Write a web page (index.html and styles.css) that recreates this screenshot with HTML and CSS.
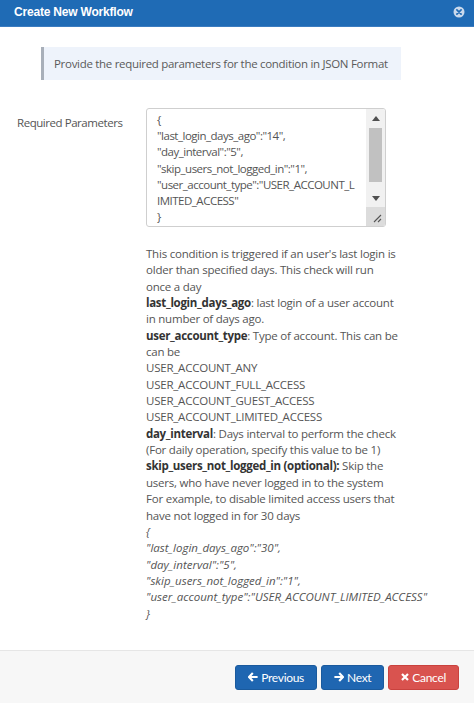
FILE: index.html
```html
<!DOCTYPE html>
<html>
<head>
<meta charset="utf-8">
<link rel="stylesheet" href="styles.css">
</head>
<body>
<div class="modal">
  <div class="modal-header">
    <span class="modal-title">Create New Workflow</span>
    <svg class="close-icon" width="12" height="12" viewBox="0 0 12 12"><circle cx="6" cy="6" r="5.5" fill="#c9d9ec"/><path d="M3.9 3.9 L8.1 8.1 M8.1 3.9 L3.9 8.1" stroke="#1f6bb5" stroke-width="1.7" stroke-linecap="round"/></svg>
  </div>
  <div class="modal-body">
    <div class="callout">Provide the required parameters for the condition in JSON Format</div>
    <div class="form-row">
      <label class="form-label">Required Parameters</label>
      <div class="form-field">
        <div class="textarea">
          <div class="ta-text">{
"last_login_days_ago":"14",
"day_interval":"5",
"skip_users_not_logged_in":"1",
"user_account_type":"USER_ACCOUNT_L
IMITED_ACCESS"
}</div>
          <div class="ta-scroll">
            <div class="sb-arrow"><svg width="8" height="5" viewBox="0 0 8 5"><path d="M0 5 L4 0 L8 5 Z" fill="#505050"/></svg></div>
            <div class="sb-track"><div class="sb-thumb"></div></div>
            <div class="sb-arrow"><svg width="8" height="5" viewBox="0 0 8 5"><path d="M0 0 L4 5 L8 0 Z" fill="#505050"/></svg></div>
            <div class="sb-corner"><svg width="9" height="9" viewBox="0 0 9 9"><path d="M1 8 L8 1 M5 8 L8 5" stroke="#555" stroke-width="1.1"/></svg></div>
          </div>
        </div>
        <div class="help">
          <p>This condition is triggered if an user's last login is<br>older than specified days. This check will run<br>once a day</p>
          <p><b>last_login_days_ago</b>: last login of a user account<br>in number of days ago.</p>
          <p><b>user_account_type</b>: Type of account. This can be<br>can be</p>
          <p>USER_ACCOUNT_ANY</p>
          <p>USER_ACCOUNT_FULL_ACCESS</p>
          <p>USER_ACCOUNT_GUEST_ACCESS</p>
          <p>USER_ACCOUNT_LIMITED_ACCESS</p>
          <p><b>day_interval</b>: Days interval to perform the check<br>(For daily operation, specify this value to be 1)</p>
          <p><b>skip_users_not_logged_in (optional):</b> Skip the<br>users, who have never logged in to the system</p>
          <p>For example, to disable limited access users that<br>have not logged in for 30 days</p>
          <p class="ex">{</p>
          <p class="ex">"last_login_days_ago":"30",</p>
          <p class="ex">"day_interval":"5",</p>
          <p class="ex">"skip_users_not_logged_in":"1",</p>
          <p class="ex">"user_account_type":"USER_ACCOUNT_LIMITED_ACCESS"</p>
          <p class="ex">}</p>
        </div>
      </div>
    </div>
  </div>
  <div class="modal-footer">
    <button class="btn btn-primary"><svg width="10" height="10" viewBox="0 0 10 10"><path d="M4.8 1 L1 5 L4.8 9 M1.3 5 L9.6 5" stroke="#fff" stroke-width="2.1" fill="none" stroke-linejoin="round"/></svg>Previous</button>
    <button class="btn btn-primary"><svg width="10" height="10" viewBox="0 0 10 10"><path d="M5.2 1 L9 5 L5.2 9 M8.7 5 L0.4 5" stroke="#fff" stroke-width="2.1" fill="none" stroke-linejoin="round"/></svg>Next</button>
    <button class="btn btn-danger"><svg width="8" height="8" viewBox="0 0 8 8"><path d="M1 1 L7 7 M7 1 L1 7" stroke="#fff" stroke-width="2.2"/></svg>Cancel</button>
  </div>
</div>
</body>
</html>
```
FILE: styles.css
```css
* { box-sizing: border-box; }
html, body { margin: 0; padding: 0; background: #fff; }
body { font-family: "Open Sans", "Noto Sans", sans-serif; color: #555; }
.modal { width: 474px; height: 705px; display: flex; flex-direction: column; }
.modal-header {
  height: 27px;
  background: #1f6bb5;
  border-bottom: 1px solid #3b7cc0;
  display: flex;
  align-items: center;
  justify-content: space-between;
  padding: 0 9px 2px 14px;
}
.modal-title { font-family: "Liberation Sans", Arial, sans-serif; font-weight: bold; font-size: 12px; color: #fff; letter-spacing: -0.2px; }
.close-icon { display: block; }
.modal-body { flex: 1; padding: 20px 0 0 0; }
.callout {
  margin-left: 41px;
  width: 360px;
  height: 33px;
  background: #eef3fb;
  border-left: 3px solid #a8afb9;
  padding-left: 10px;
  display: flex;
  align-items: center;
  font-size: 11.5px;
  letter-spacing: -0.3px;
  color: #5a5a5a;
  white-space: nowrap;
}
.form-row { display: grid; grid-template-columns: 146px 290px; margin-top: 28px; }
.form-label { padding: 7px 0 0 17px; font-size: 11.5px; letter-spacing: -0.45px; color: #555; white-space: nowrap; }
.textarea {
  width: 240px;
  height: 119px;
  border: 1px solid #cfcfcf;
  border-radius: 3px;
  display: flex;
  overflow: hidden;
}
.ta-text {
  flex: 1;
  white-space: pre;
  padding: 3px 0 0 10px;
  font-size: 11.5px;
  letter-spacing: -0.5px;
  line-height: 16.2px;
  color: #555;
  overflow: hidden;
}
.ta-scroll { width: 19px; display: flex; flex-direction: column; background: #f1f1f1; }
.sb-arrow { height: 18px; display: flex; align-items: center; justify-content: center; }
.sb-arrow svg { display: block; }
.sb-track { flex: 1; padding: 1px 3px 7px 3px; display: flex; }
.sb-thumb { flex: 1; background: #c1c1c1; }
.sb-corner { height: 19px; background: #dcdcdc; display: flex; align-items: flex-end; justify-content: flex-end; padding: 0 3px 3px 0; }
.sb-corner svg { display: block; }
.help { margin-top: 19px; font-size: 11.5px; line-height: 16.35px; color: #555; white-space: nowrap; letter-spacing: -0.22px; }
.help p { margin: 0; }
.help b { color: #333; font-weight: bold; letter-spacing: -0.3px; }
.help .ex { font-style: italic; letter-spacing: 0; }
.modal-footer {
  height: 53px;
  margin-bottom: 2px;
  background: #f7f7f7;
  border-top: 1px solid #e6e6e6;
  display: flex;
  justify-content: flex-end;
  align-items: center;
  gap: 4px;
  padding: 0 15px 0 0;
}
.btn {
  height: 25px;
  border-radius: 3px;
  color: #fff;
  font-family: Lato, sans-serif;
  font-size: 12px;
  display: flex;
  align-items: center;
  gap: 3px;
  padding: 0 12px;
  letter-spacing: -0.3px;
}
.btn svg { display: block; }
.btn-primary { background: #1f66b1; border: 1px solid #1a5a9d; }
.btn-danger { background: #d9534f; border: 1px solid #c9423e; }
```
